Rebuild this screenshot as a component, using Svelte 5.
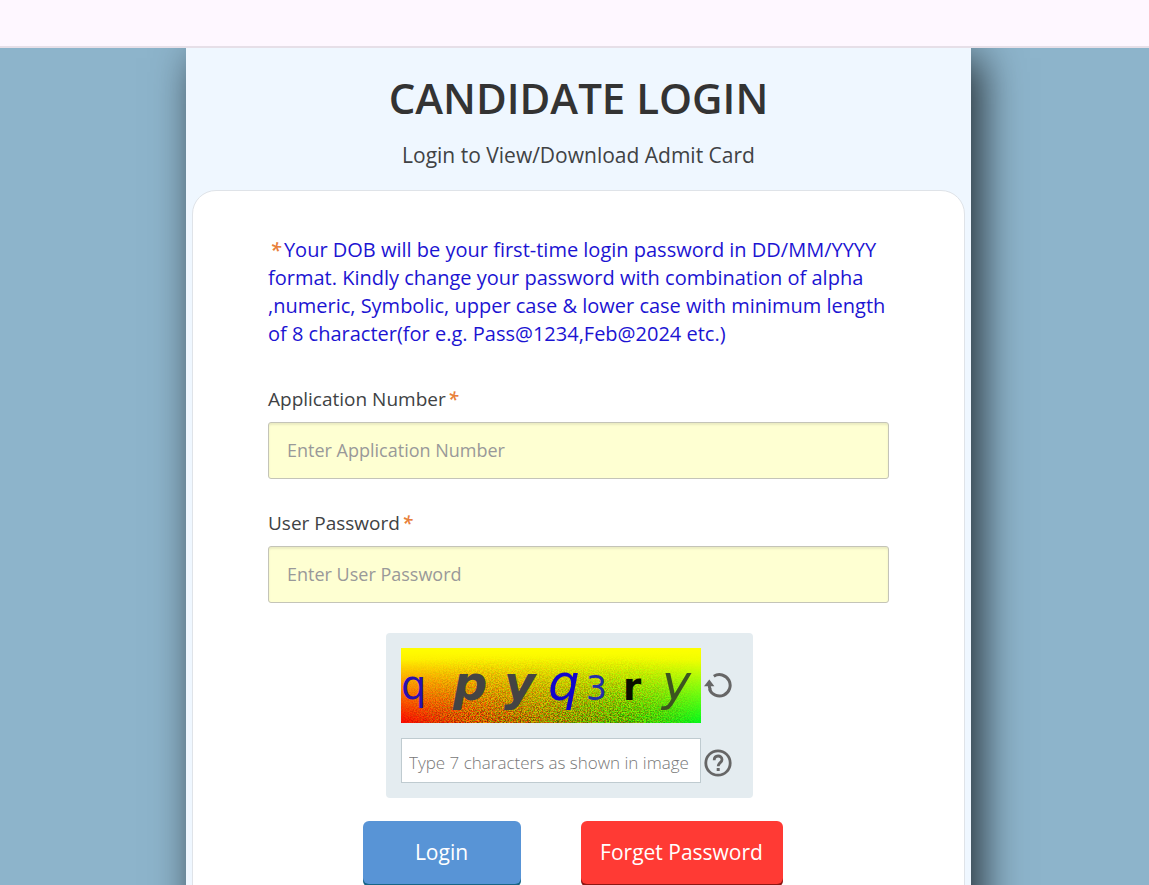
<script>
  let applicationNumber = $state('');
  let password = $state('');
  let answer = $state('');

  const glyphs = [
    { char: 'q', x: 0, y: 51, size: 40, fill: '#2a0fb0', weight: 400, style: 'normal' },
    { char: 'p', x: 52, y: 52, size: 48, fill: '#444444', weight: 700, style: 'italic' },
    { char: 'y', x: 103, y: 52, size: 48, fill: '#444444', weight: 700, style: 'italic' },
    { char: 'q', x: 147, y: 52, size: 50, fill: '#1206cc', weight: 400, style: 'italic' },
    { char: '3', x: 185, y: 52, size: 33, fill: '#2431a8', weight: 400, style: 'normal' },
    { char: 'r', x: 222, y: 52, size: 37, fill: '#0a0f00', weight: 700, style: 'normal' },
    { char: 'y', x: 261, y: 52, size: 49, fill: '#3c5420', weight: 400, style: 'italic' }
  ];
</script>

<div class="page">
  <header class="topbar"></header>
  <main class="panel">
    <h1>CANDIDATE LOGIN</h1>
    <p class="subtitle">Login to View/Download Admit Card</p>
    <form class="card" onsubmit={(e) => e.preventDefault()}>
      <p class="notice"><span class="star lead">*</span>Your DOB will be your first-time login password in DD/MM/YYYY format. Kindly change your password with combination of alpha ,numeric, Symbolic, upper case &amp; lower case with minimum length of 8 character(for e.g. Pass@1234,Feb@2024 etc.)</p>

      <div class="field">
        <label for="application">Application Number<span class="star">*</span></label>
        <input id="application" type="text" placeholder="Enter Application Number" bind:value={applicationNumber} />
      </div>
      <div class="field">
        <label for="password">User Password<span class="star">*</span></label>
        <input id="password" type="password" placeholder="Enter User Password" bind:value={password} />
      </div>

      <div class="captcha">
        <svg class="challenge" viewBox="0 0 300 75" width="300" height="75">
          <defs>
            <linearGradient id="hue">
              <stop offset="0" stop-color="#ff0000" />
              <stop offset="0.25" stop-color="#f04000" />
              <stop offset="0.5" stop-color="#a89000" />
              <stop offset="0.75" stop-color="#40d800" />
              <stop offset="1" stop-color="#00ff1c" />
            </linearGradient>
            <linearGradient id="sun" x2="0" y2="1">
              <stop offset="0" stop-color="#ffff00" />
              <stop offset="0.15" stop-color="#ffff00" stop-opacity="0.95" />
              <stop offset="1" stop-color="#ffff00" stop-opacity="0" />
            </linearGradient>
            <linearGradient id="fade" x2="0" y2="1">
              <stop offset="0.08" stop-color="#fff" stop-opacity="0" />
              <stop offset="0.5" stop-color="#fff" stop-opacity="0.4" />
              <stop offset="1" stop-color="#fff" stop-opacity="0.8" />
            </linearGradient>
            <linearGradient id="sides">
              <stop offset="0" stop-color="#000" stop-opacity="0.9" />
              <stop offset="0.25" stop-color="#000" stop-opacity="0.35" />
              <stop offset="0.75" stop-color="#000" stop-opacity="0.35" />
              <stop offset="1" stop-color="#000" stop-opacity="0.95" />
            </linearGradient>
            <mask id="speckle">
              <rect width="300" height="75" fill="url(#fade)" />
              <rect width="300" height="75" fill="url(#sides)" />
            </mask>
            <filter id="grain" x="0" y="0" width="1" height="1" color-interpolation-filters="sRGB">
              <feTurbulence type="fractalNoise" baseFrequency="0.73 0.79" numOctaves="3" seed="7" />
              <feColorMatrix values="5 0 0 0 -1.9  0 5 0 0 -2  0 0 0 0 0  0 0 0 0 0.8" />
            </filter>
          </defs>
          <rect width="300" height="75" fill="url(#hue)" />
          <rect width="300" height="75" fill="url(#sun)" />
          <g mask="url(#speckle)"><rect width="300" height="75" filter="url(#grain)" /></g>
          {#each glyphs as g}
            <text x={g.x} y={g.y} font-size={g.size} fill={g.fill} font-weight={g.weight} font-style={g.style}>{g.char}</text>
          {/each}
        </svg>
        <button class="icon" type="button" aria-label="Refresh">
          <svg viewBox="0 0 28 28" width="28" height="28">
            <path d="M9.8 4.2A10.7 10.7 0 1 1 5.4 17" fill="none" stroke="#666" stroke-width="3" />
            <path d="M0 14.3 5.3 7.5 10.4 14.3Z" fill="#666" />
            <path d="M5.2 12.5C5.2 15 5.6 16.4 6.5 18" fill="none" stroke="#666" stroke-width="3" />
          </svg>
        </button>
        <input type="text" aria-label="Captcha" placeholder="Type 7 characters as shown in image" bind:value={answer} />
        <button class="icon help" type="button" aria-label="Help">
          <svg viewBox="0 0 28 28" width="28" height="28">
            <circle cx="14" cy="14" r="12.2" fill="none" stroke="#666" stroke-width="2.8" />
            <path d="M10.2 11.2C10.2 5.6 18 5.8 18 10.7C18 13.6 14.3 13.7 14.2 17.2" fill="none" stroke="#666" stroke-width="2.8" />
            <rect x="12.7" y="19" width="3" height="3" fill="#666" />
          </svg>
        </button>
      </div>

      <div class="actions">
        <button class="login" type="submit">Login</button>
        <button class="forget" type="button">Forget Password</button>
      </div>
    </form>
  </main>
</div>

<style>
  :global(body) {
    margin: 0;
    background: #8db4cb;
    overflow: hidden;
  }
  .page {
    font-family: 'Open Sans', 'Noto Sans', sans-serif;
    color: #404244;
    display: flex;
    flex-direction: column;
  }
  .topbar {
    position: relative;
    z-index: 1;
    height: 46px;
    background: #fef7ff;
    border-bottom: 2px solid #e6dfe8;
  }
  .panel {
    margin: 0 178px 0 186px;
    padding: 0 6px 24px;
    background: #eff7ff;
    box-shadow: 10px 10px 40px rgba(0, 0, 0, 0.75);
  }
  h1 {
    margin: 0;
    padding-top: 20px;
    font-size: 42px;
    line-height: 60px;
    font-weight: 600;
    text-align: center;
    color: #333;
  }
  .subtitle {
    margin: 13px 0 20px;
    font-size: 21px;
    line-height: 29px;
    text-align: center;
  }
  .card {
    padding: 45px 75px 32px;
    background: #fff;
    border: 1px solid #dfe3e8;
    border-radius: 24px;
  }
  .notice {
    margin: 0;
    padding-bottom: 37px;
    font-size: 20px;
    line-height: 28px;
    color: #1c14d2;
  }
  .star {
    margin-left: 2px;
    color: #e8803a;
    font-style: italic;
    font-weight: 600;
  }
  .lead {
    margin-right: 3px;
  }
  .field {
    display: flex;
    flex-direction: column;
  }
  .field + .field {
    margin-top: 30px;
  }
  label {
    margin-bottom: 8px;
    font-size: 19px;
    line-height: 29px;
  }
  input {
    box-sizing: border-box;
    font: 400 18px 'Open Sans', 'Noto Sans', sans-serif;
    color: #333;
  }
  input::placeholder {
    color: #999;
    opacity: 1;
  }
  .field input {
    width: 100%;
    height: 57px;
    padding: 0 18px 1px;
    background: #feffd2;
    border: 1px solid #c4c4b8;
    border-radius: 3px;
    box-shadow: inset 0 2px 2px rgba(0, 0, 0, 0.08);
  }
  .captcha {
    display: grid;
    grid-template-columns: 300px 28px;
    column-gap: 3px;
    row-gap: 15px;
    align-items: center;
    width: fit-content;
    margin: 30px auto 0 118px;
    padding: 15px 21px 15px 15px;
    background: #e4ecf0;
    border-radius: 4px;
  }
  .challenge {
    display: block;
    font-family: 'DejaVu Sans', sans-serif;
  }
  .captcha input {
    width: 300px;
    height: 45px;
    padding: 4px 7px 0;
    font-size: 17px;
    font-weight: 300;
    background: #fff;
    border: 1px solid #bfcbd0;
    border-radius: 0;
  }
  .captcha input::placeholder {
    color: #777;
  }
  button {
    font-family: inherit;
    border: 0;
    cursor: pointer;
  }
  .icon {
    padding: 0;
    background: none;
    line-height: 0;
  }
  .help {
    padding-top: 4px;
  }
  .actions {
    display: flex;
    justify-content: center;
    gap: 60px;
    margin: 23px 12px 0 0;
  }
  .actions button {
    height: 63px;
    padding: 0 0 1px;
    border-radius: 6px;
    font-size: 21px;
    color: #fff;
  }
  .actions .login {
    width: 158px;
    background: #5894d6;
    box-shadow: 0 3px 0 #176587;
  }
  .actions .forget {
    width: 202px;
    background: #ff3a34;
    box-shadow: 0 3px 0 #8e1612;
  }
</style>
